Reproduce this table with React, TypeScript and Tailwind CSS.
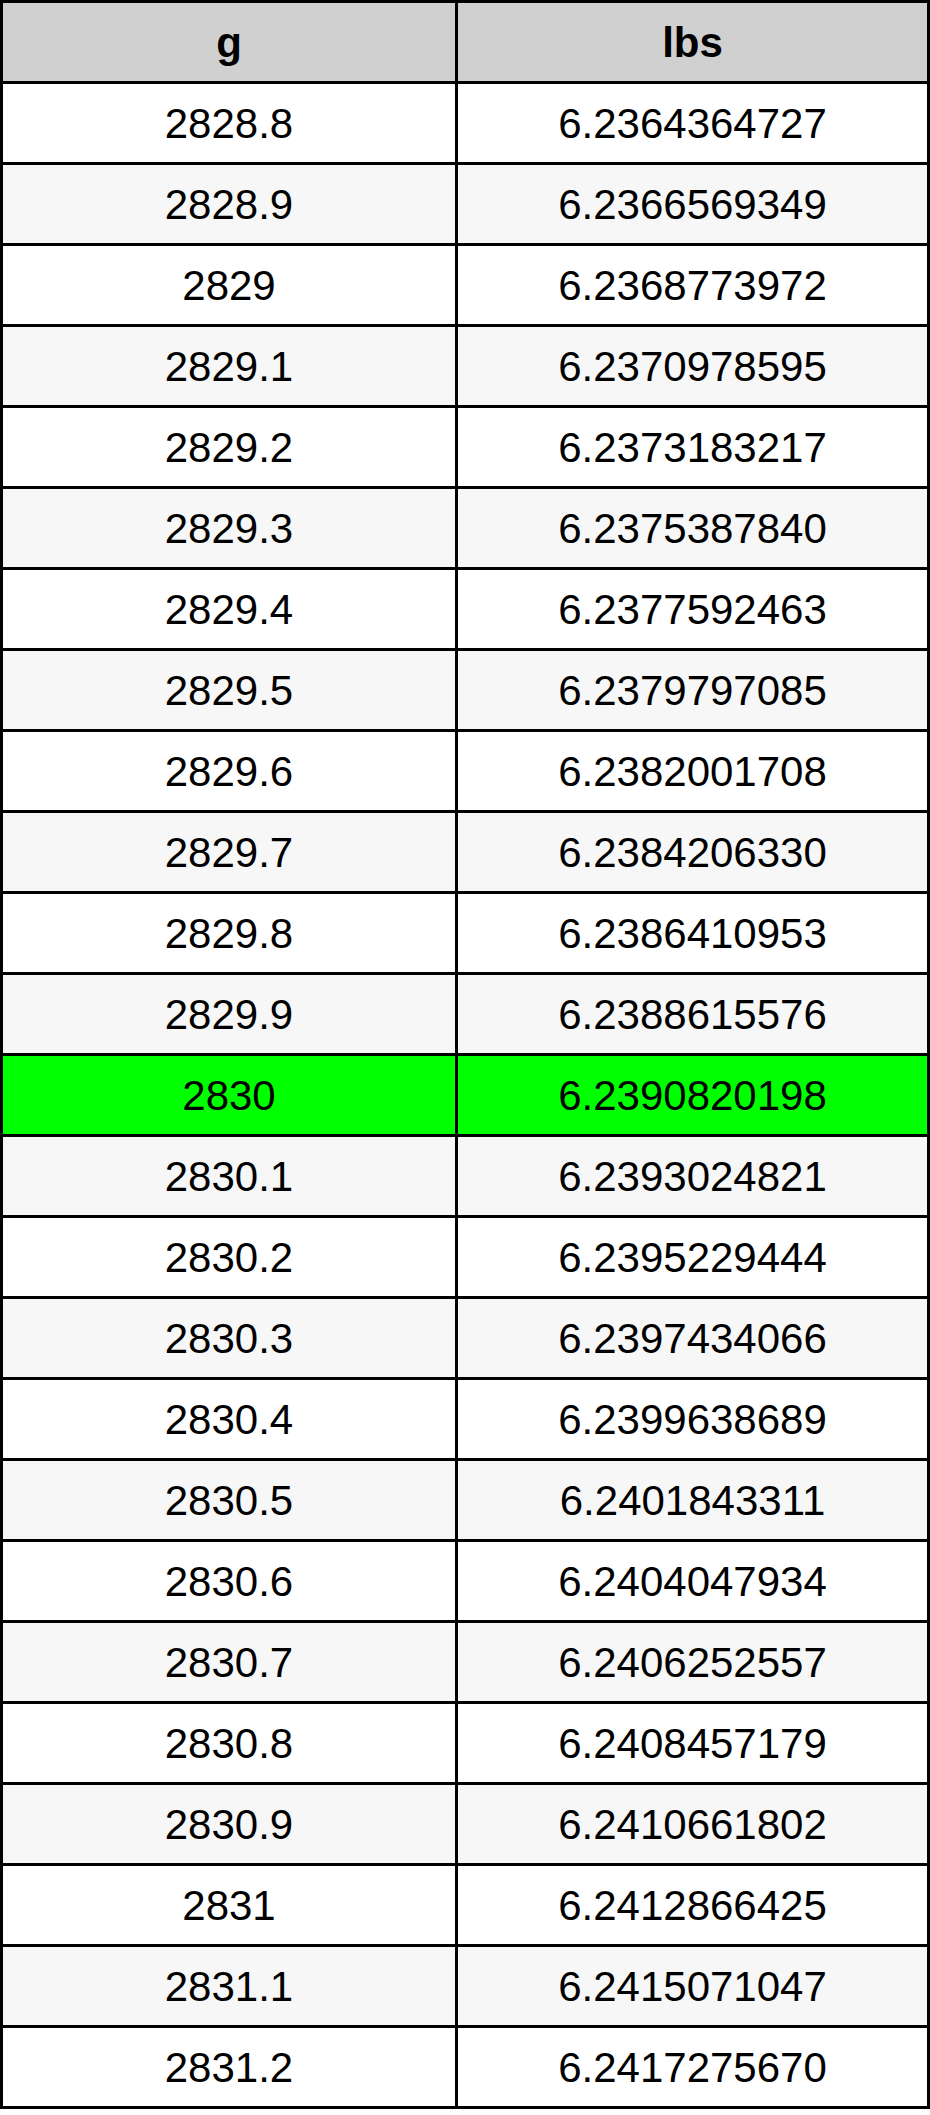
import React from "react";

const rows: [string, string][] = [
  ["2828.8", "6.2364364727"],
  ["2828.9", "6.2366569349"],
  ["2829", "6.2368773972"],
  ["2829.1", "6.2370978595"],
  ["2829.2", "6.2373183217"],
  ["2829.3", "6.2375387840"],
  ["2829.4", "6.2377592463"],
  ["2829.5", "6.2379797085"],
  ["2829.6", "6.2382001708"],
  ["2829.7", "6.2384206330"],
  ["2829.8", "6.2386410953"],
  ["2829.9", "6.2388615576"],
  ["2830", "6.2390820198"],
  ["2830.1", "6.2393024821"],
  ["2830.2", "6.2395229444"],
  ["2830.3", "6.2397434066"],
  ["2830.4", "6.2399638689"],
  ["2830.5", "6.2401843311"],
  ["2830.6", "6.2404047934"],
  ["2830.7", "6.2406252557"],
  ["2830.8", "6.2408457179"],
  ["2830.9", "6.2410661802"],
  ["2831", "6.2412866425"],
  ["2831.1", "6.2415071047"],
  ["2831.2", "6.2417275670"],
];

const cell =
  "h-[81px] flex items-center justify-center border-r-[3px] border-b-[3px] border-black";

const App: React.FC = () => {
  return (
    <div className="w-[930px] min-h-[2115px] bg-white font-['Liberation_Sans',Arial,sans-serif] text-black">
      {/* Table */}
      <div className="grid grid-cols-[455px_472px] border-l-[3px] border-t-[3px] border-black text-[42px]">
        {/* Header */}
        <div className={`${cell} bg-[#d0d0d0] font-bold`}>g</div>
        <div className={`${cell} bg-[#d0d0d0] font-bold`}>lbs</div>

        {/* Rows */}
        {rows.map(([g, lbs], i) => {
          const bg =
            g === "2830"
              ? "bg-[#00ff00]"
              : i % 2 === 1
              ? "bg-[#f7f7f7]"
              : "bg-white";
          return (
            <React.Fragment key={g}>
              <div className={`${cell} ${bg}`}>{g}</div>
              <div className={`${cell} ${bg}`}>{lbs}</div>
            </React.Fragment>
          );
        })}
      </div>
    </div>
  );
};

export default App;
